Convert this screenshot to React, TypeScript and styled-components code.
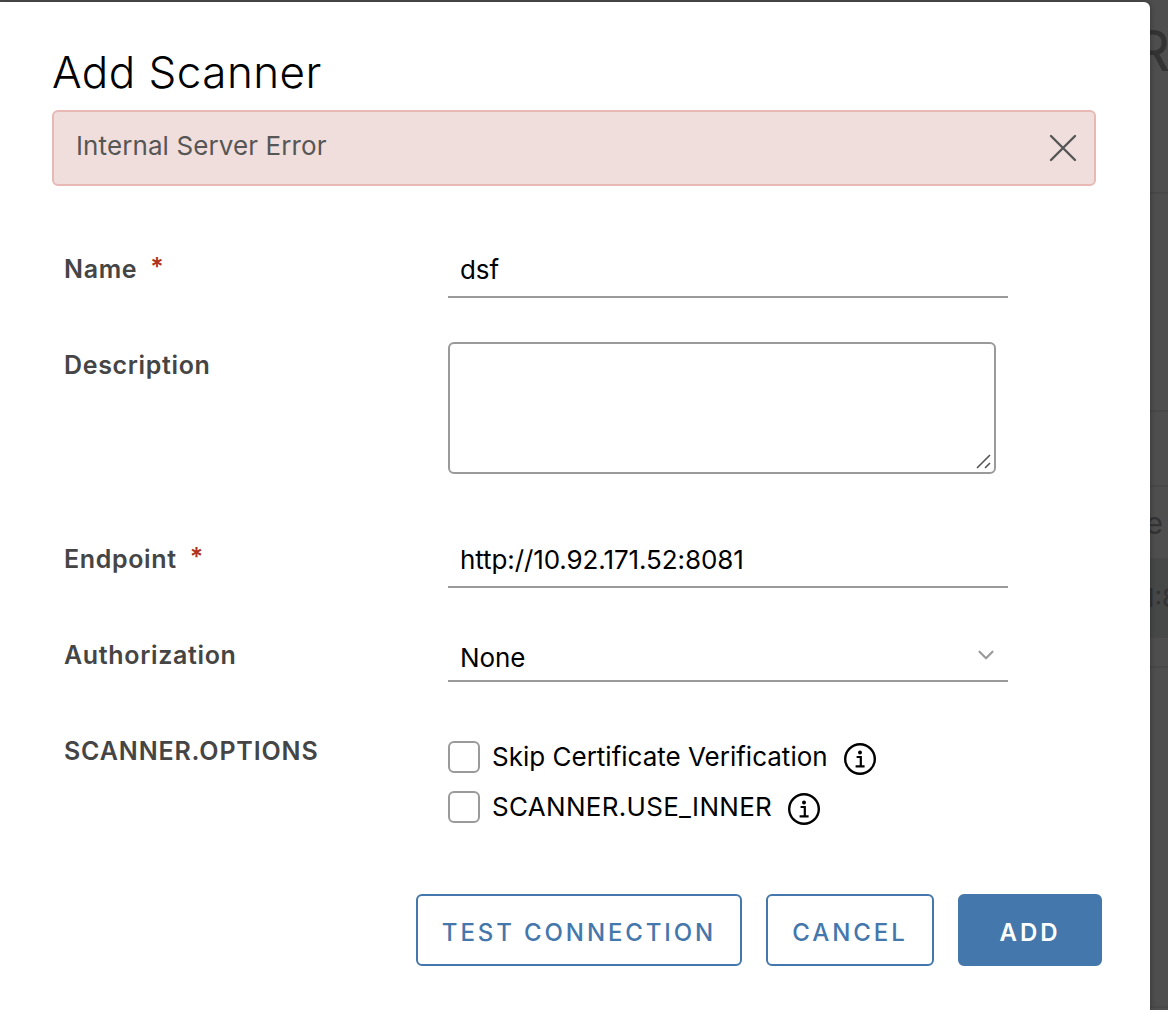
import React from "react";
import styled, { createGlobalStyle } from "styled-components";
import { ChevronDown } from "lucide-react";

const FONT = `Inter, "Noto Sans", "Liberation Sans", sans-serif`;

const Global = createGlobalStyle`
  html, body { margin: 0; padding: 0; height: 1010px; overflow: hidden; background: #4e4e4e; }
  * { box-sizing: border-box; }
  #root { height: 1010px; }
`;

const Page = styled.div`
  display: flex;
  width: 1168px;
  height: 1010px;
  padding-top: 2px;
  background: #4e4e4e;
  font-family: ${FONT};
  overflow: hidden;
`;

const Modal = styled.main`
  position: relative;
  z-index: 1;
  flex: 0 0 1150px;
  height: 1008px;
  padding: 0 48px 0 52px;
  background: #fff;
  border-top-right-radius: 6px;
  box-shadow: 0 0 5px 1px rgba(0, 0, 0, 0.25);
`;

const Title = styled.h1`
  height: 108px;
  margin: 0;
  padding-top: 42px;
  font-size: 44px;
  line-height: 56px;
  font-weight: 300;
  color: #000;
  letter-spacing: 0.45px;
`;

const Alert = styled.div`
  display: flex;
  align-items: center;
  justify-content: space-between;
  width: 1044px;
  height: 76px;
  padding: 0 16px 0 22px;
  background: #efdedc;
  border: 2px solid #e8b9b4;
  border-radius: 6px;
  color: #565656;
  font-size: 26px;
  letter-spacing: 0.1px;
`;

const AlertText = styled.span`
  padding-bottom: 6px;
`;

const Form = styled.form`
  margin: 0 0 0 12px;
`;

const Row = styled.div<{ $top: number; $height: number }>`
  display: grid;
  grid-template-columns: 384px 1fr;
  margin-top: ${(p) => p.$top}px;
  height: ${(p) => p.$height}px;
`;

const Label = styled.label<{ $pad: number; $caps?: boolean }>`
  padding-top: ${(p) => p.$pad}px;
  font-size: 25px;
  line-height: 34px;
  font-weight: 600;
  color: #454545;
  letter-spacing: ${(p) => (p.$caps ? 0.85 : 0.65)}px;
`;

const Required = styled.span`
  display: inline-block;
  margin-left: 13px;
  color: #b0341d;
  font-weight: 600;
  transform: translateY(-2px);
`;

const Underlined = styled.div<{ $pad?: number }>`
  display: flex;
  align-items: center;
  justify-content: space-between;
  width: 560px;
  height: 100%;
  padding: ${(p) => p.$pad ?? 0}px 9px 0 12px;
  border-bottom: 2px solid #9a9a9a;
  color: #000;
  font-size: 26px;
  letter-spacing: -0.1px;
`;

const Chevron = styled(ChevronDown)`
  margin-top: -4px;
`;

const TextArea = styled.div`
  position: relative;
  width: 548px;
  height: 132px;
  border: 2px solid #9a9a9a;
  border-radius: 6px;
`;

const Grip = styled.svg`
  position: absolute;
  right: 1px;
  bottom: 1px;
`;

const OptionList = styled.div`
  display: flex;
  flex-direction: column;
  gap: 18px;
  padding-top: 7px;
`;

const Option = styled.div`
  display: flex;
  align-items: center;
  height: 32px;
  color: #000;
  font-size: 26px;
  white-space: nowrap;
`;

const OptionText = styled.span<{ $tracking?: number }>`
  margin-top: -2px;
  letter-spacing: ${(p) => p.$tracking ?? 0}px;
`;

const Box = styled.span`
  flex: 0 0 32px;
  width: 32px;
  height: 32px;
  margin-right: 12px;
  background: #fff;
  border: 2px solid #9a9a9a;
  border-radius: 6px;
`;

const InfoIcon = styled.svg`
  margin: 4px 0 0 16px;
  flex: 0 0 32px;
`;

const Actions = styled.div`
  display: flex;
  justify-content: flex-end;
  gap: 24px;
  width: 1050px;
  margin-top: 71px;
`;

const Button = styled.button<{ $primary?: boolean; $w: number }>`
  width: ${(p) => p.$w}px;
  height: 72px;
  padding: 4px 0 0;
  border: 2px solid #4477ac;
  border-radius: 6px;
  background: ${(p) => (p.$primary ? "#4477ac" : "#fff")};
  color: ${(p) => (p.$primary ? "#fff" : "#4477ac")};
  font-family: ${FONT};
  font-size: 24px;
  font-weight: ${(p) => (p.$primary ? 600 : 500)};
  letter-spacing: 2.9px;
`;

const Close = styled.svg`
  display: block;
`;

const Behind = styled.aside`
  flex: 1;
  min-width: 0;
  display: flex;
  flex-direction: column;
`;

const BehindRow = styled.div<{ $h: number; $dark?: boolean; $top?: boolean }>`
  flex: 0 0 ${(p) => p.$h}px;
  display: flex;
  align-items: ${(p) => (p.$top ? "flex-start" : "center")};
  background: ${(p) => (p.$dark ? "#464747" : "transparent")};
  border-bottom: 2px solid #484848;
  white-space: nowrap;
`;

const BehindText = styled.span<{ $shift: number; $size: number; $drop?: number }>`
  margin: ${(p) => p.$drop ?? 0}px 0 0 ${(p) => p.$shift}px;
  font-size: ${(p) => p.$size}px;
  line-height: 1;
  font-weight: 400;
  color: #333;
`;

const Info = () => (
  <InfoIcon width="32" height="32" viewBox="0 0 32 32" fill="none" aria-hidden>
    <circle cx="16" cy="16" r="14.8" stroke="#000" strokeWidth="2.4" />
    <circle cx="16" cy="9.6" r="2" fill="#000" />
    <path d="M12.6 14h4.2v9M11.6 23.4h9" stroke="#000" strokeWidth="2.2" />
  </InfoIcon>
);

export default function App() {
  return (
    <Page>
      <Global />
      <Modal>
        <Title>Add Scanner</Title>
        <Alert>
          <AlertText>Internal Server Error</AlertText>
          <Close width="30" height="30" viewBox="0 0 30 30" aria-label="Close">
            <path d="M3 3l24 24M27 3L3 27" stroke="#565656" strokeWidth="2.4" strokeLinecap="round" />
          </Close>
        </Alert>
        <Form>
          <Row $top={56} $height={56}>
            <Label $pad={10}>
              Name<Required>*</Required>
            </Label>
            <Underlined>dsf</Underlined>
          </Row>
          <Row $top={44} $height={132}>
            <Label $pad={6}>Description</Label>
            <TextArea>
              <Grip width="18" height="18" viewBox="0 0 18 18" aria-hidden>
                <path d="M2 15L15 2M10 15l5-5" stroke="#555" strokeWidth="1.6" />
              </Grip>
            </TextArea>
          </Row>
          <Row $top={58} $height={56}>
            <Label $pad={10}>
              Endpoint<Required>*</Required>
            </Label>
            <Underlined>http://10.92.171.52:8081</Underlined>
          </Row>
          <Row $top={38} $height={56}>
            <Label $pad={12}>Authorization</Label>
            <Underlined $pad={8}>
              None
              <Chevron size={26} color="#9a9a9a" strokeWidth={2} />
            </Underlined>
          </Row>
          <Row $top={52} $height={89}>
            <Label $pad={0} $caps>SCANNER.OPTIONS</Label>
            <OptionList>
              <Option>
                <Box />
                <OptionText>Skip Certificate Verification</OptionText>
                <Info />
              </Option>
              <Option>
                <Box />
                <OptionText $tracking={0.3}>SCANNER.USE_INNER</OptionText>
                <Info />
              </Option>
            </OptionList>
          </Row>
        </Form>
        <Actions>
          <Button $w={326} type="button">TEST CONNECTION</Button>
          <Button $w={168} type="button">CANCEL</Button>
          <Button $w={144} $primary type="button">ADD</Button>
        </Actions>
      </Modal>
      <Behind>
        <BehindRow $h={192} $top>
          <BehindText $shift={-16} $size={56} $drop={21}>R</BehindText>
        </BehindRow>
        <BehindRow $h={218} />
        <BehindRow $h={75} />
        <BehindRow $h={73}>
          <BehindText $shift={-14} $size={30}>te</BehindText>
        </BehindRow>
        <BehindRow $h={78} $dark>
          <BehindText $shift={-6} $size={26}>1:8</BehindText>
        </BehindRow>
        <BehindRow $h={30} />
        <BehindRow $h={340} />
      </Behind>
    </Page>
  );
}
